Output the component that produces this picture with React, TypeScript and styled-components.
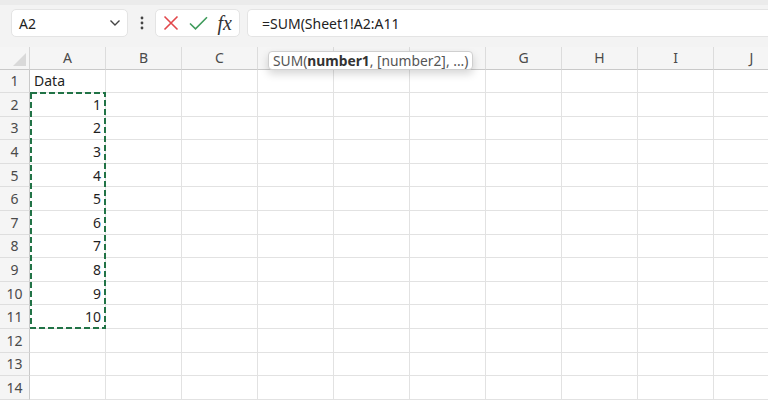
import React from 'react'
import styled, { createGlobalStyle } from 'styled-components'

const ROW_H = 23.6
const HEAD_H = 22.5
const ROW_HEAD_W = 30
const COL_W = 76
const COLS = ['A', 'B', 'C', 'D', 'E', 'F', 'G', 'H', 'I', 'J']
const FONT = `'Segoe UI', 'Noto Sans', 'Open Sans', sans-serif`

const Global = createGlobalStyle`
  html, body { margin: 0; padding: 0; background: #ffffff; overflow: hidden; }
  body { font-family: ${FONT}; color: #222; }
`

const Screen = styled.div`
  width: 768px;
  height: 403px;
  overflow: hidden;
  display: flex;
  flex-direction: column;
  background: #fff;
`

const TopStrip = styled.div`
  height: 5px;
  background: #ebebeb;
`

const FormulaBar = styled.div`
  display: flex;
  align-items: center;
  padding: 4px 0 10px 11px;
  background: #f3f3f3;
`

const Box = styled.div<{ $w?: number; $grow?: boolean }>`
  height: 28px;
  box-sizing: border-box;
  background: #fff;
  border: 1px solid #e4e4e4;
  border-radius: 5px;
  display: flex;
  align-items: center;
  ${(p) => (p.$w ? `width: ${p.$w}px;` : '')}
  ${(p) => (p.$grow ? 'flex: 1; border-right: none; border-radius: 5px 0 0 5px;' : '')}
`

const NameText = styled.span`
  flex: 1;
  padding-left: 7px;
  font-size: 14px;
  color: #222;
`

const Chevron = styled.svg`
  margin-right: 6px;
`

const Dots = styled.div`
  width: 27px;
  display: flex;
  justify-content: center;
`

const IconGroup = styled(Box)`
  padding: 0 5px 0 7px;
  justify-content: space-between;
  margin-right: 7px;
`

const Fx = styled.span`
  font-family: 'Liberation Serif', 'DejaVu Serif', serif;
  font-style: italic;
  font-size: 20px;
  color: #333;
  padding-right: 2px;
  line-height: 1;
`

const FormulaText = styled.span`
  padding-left: 14px;
  font-size: 14px;
  color: #222;
`

const Sheet = styled.div`
  position: relative;
  flex: 1;
`

const Row = styled.div<{ $h: number }>`
  display: grid;
  grid-template-columns: ${ROW_HEAD_W}px repeat(${COLS.length}, ${COL_W}px);
  height: ${(p) => p.$h}px;
`

const Corner = styled.div`
  background: #f5f5f5;
  border-right: 1px solid #d6d6d6;
  border-bottom: 1px solid #c9c9c9;
  display: flex;
  align-items: flex-end;
  justify-content: flex-end;
  padding: 0 3px 3px 0;
  box-sizing: border-box;
`

const ColHead = styled.div`
  background: #f5f5f5;
  border-right: 1px solid #dcdcdc;
  border-bottom: 1px solid #c9c9c9;
  box-sizing: border-box;
  display: flex;
  align-items: center;
  justify-content: center;
  font-size: 14px;
  color: #4a4a4a;
`

const RowHead = styled.div`
  background: #f5f5f5;
  border-right: 1px solid #c9c9c9;
  border-bottom: 1px solid #dedede;
  box-sizing: border-box;
  display: flex;
  align-items: center;
  justify-content: center;
  font-size: 14px;
  color: #4a4a4a;
`

const Cell = styled.div<{ $num?: boolean }>`
  border-right: 1px solid #e2e2e2;
  border-bottom: 1px solid #e2e2e2;
  box-sizing: border-box;
  display: flex;
  align-items: center;
  justify-content: ${(p) => (p.$num ? 'flex-end' : 'flex-start')};
  padding: 0 4px;
  font-size: 14px;
  color: #1f1f1f;
`

const Marquee = styled.svg`
  position: absolute;
  left: ${ROW_HEAD_W}px;
  top: ${HEAD_H + ROW_H - 1}px;
  overflow: visible;
`

const Tip = styled.div`
  position: absolute;
  left: 268px;
  top: 4px;
  height: 19px;
  width: 205px;
  box-sizing: border-box;
  padding: 0 0 0 4px;
  background: #fff;
  border: 1px solid #cfcfcf;
  border-radius: 4px;
  box-shadow: 0 4px 9px rgba(0, 0, 0, 0.16);
  font-size: 13.8px;
  color: #555;
  display: flex;
  align-items: center;
  white-space: nowrap;
  b { color: #333; font-weight: 700; }
`

const data: Record<number, { text: string; num?: boolean }> = {
  1: { text: 'Data' },
}
for (let i = 2; i <= 11; i++) data[i] = { text: String(i - 1), num: true }

export default function App() {
  const marqueeH = 10 * ROW_H
  return (
    <Screen>
      <Global />
      <TopStrip />
      <FormulaBar>
        <Box $w={117}>
          <NameText>A2</NameText>
          <Chevron width="12" height="8" viewBox="0 0 12 8">
            <path d="M1.5 1.5 L6 6 L10.5 1.5" fill="none" stroke="#444" strokeWidth="1.4" />
          </Chevron>
        </Box>
        <Dots>
          <svg width="4" height="14" viewBox="0 0 4 14">
            <circle cx="2" cy="2" r="1.4" fill="#444" />
            <circle cx="2" cy="7" r="1.4" fill="#444" />
            <circle cx="2" cy="12" r="1.4" fill="#444" />
          </svg>
        </Dots>
        <IconGroup $w={85}>
          <svg width="16" height="16" viewBox="0 0 16 16">
            <path d="M1.5 1.5 L14.5 14.5 M14.5 1.5 L1.5 14.5" stroke="#e2474b" strokeWidth="1.6" />
          </svg>
          <svg width="19" height="14" viewBox="0 0 19 14">
            <path d="M1 7.5 L6.5 12.8 L18 1.2" fill="none" stroke="#3f9b5c" strokeWidth="1.6" />
          </svg>
          <Fx>fx</Fx>
        </IconGroup>
        <Box $grow>
          <FormulaText>=SUM(Sheet1!A2:A11</FormulaText>
        </Box>
      </FormulaBar>
      <Sheet>
        <Row $h={HEAD_H}>
          <Corner>
            <svg width="13" height="13" viewBox="0 0 13 13">
              <path d="M13 0 L13 13 L0 13 Z" fill="#d9d9d9" />
            </svg>
          </Corner>
          {COLS.map((c) => (
            <ColHead key={c}>{c}</ColHead>
          ))}
        </Row>
        {Array.from({ length: 14 }, (_, i) => i + 1).map((r) => (
          <Row key={r} $h={ROW_H}>
            <RowHead>{r}</RowHead>
            {COLS.map((c) => (
              <Cell key={c} $num={c === 'A' && data[r]?.num}>
                {c === 'A' ? data[r]?.text : null}
              </Cell>
            ))}
          </Row>
        ))}
        <Marquee width={COL_W} height={marqueeH + 1}>
          <rect
            x="1"
            y="1"
            width={COL_W - 2}
            height={marqueeH - 1}
            fill="none"
            stroke="#217346"
            strokeWidth="2"
            strokeDasharray="6 3"
          />
        </Marquee>
        <Tip>
          SUM(<b>number1</b>, [number2], ...)
        </Tip>
      </Sheet>
    </Screen>
  )
}
